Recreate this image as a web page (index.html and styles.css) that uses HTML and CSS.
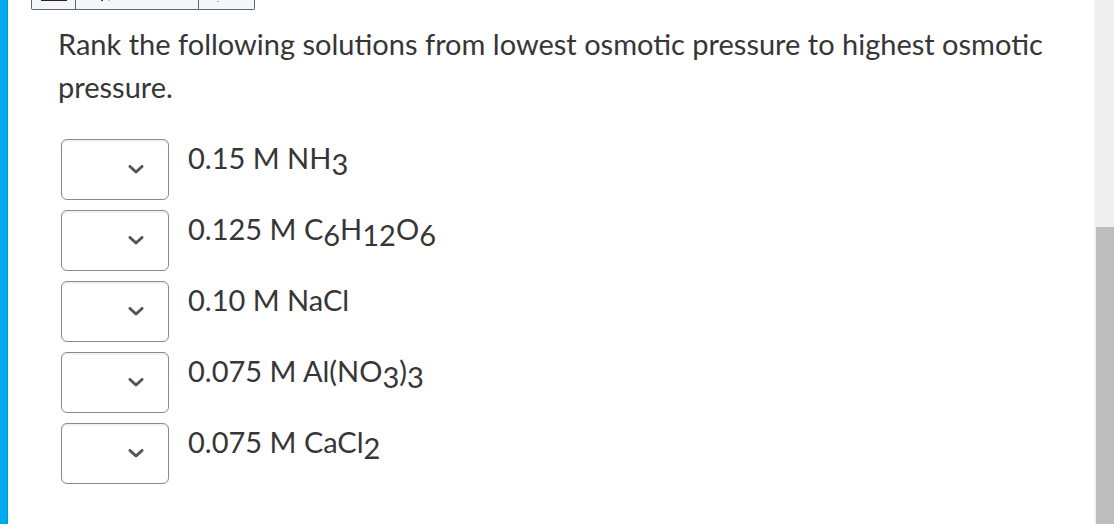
FILE: index.html
```html
<!DOCTYPE html>
<html lang="en">
<head>
<meta charset="utf-8">
<title>Osmotic pressure ranking</title>
<link rel="stylesheet" href="styles.css">
</head>
<body>
<div class="frame">
  <div class="accent"></div>
  <main class="content">
    <div class="toolbar">
      <div class="tool tool-first"><span class="tool-mark"></span></div>
      <div class="tool tool-mid"><span class="dot dot-navy"></span><span class="dot dot-peach"></span></div>
      <div class="tool tool-last"><span class="dot dot-green"></span></div>
    </div>
    <p class="prompt">Rank the following solutions from lowest osmotic pressure to highest osmotic pressure.</p>
    <ol class="rank-list">
      <li class="rank-row">
        <button class="picker" type="button" aria-label="rank"><svg class="chev" viewBox="0 0 16 9" width="16" height="9"><path d="M2 1.5 L8 7 L14 1.5" /></svg></button>
        <span class="species">0.15 M NH<sub>3</sub></span>
      </li>
      <li class="rank-row">
        <button class="picker" type="button" aria-label="rank"><svg class="chev" viewBox="0 0 16 9" width="16" height="9"><path d="M2 1.5 L8 7 L14 1.5" /></svg></button>
        <span class="species">0.125 M C<sub>6</sub>H<sub>12</sub>O<sub>6</sub></span>
      </li>
      <li class="rank-row">
        <button class="picker" type="button" aria-label="rank"><svg class="chev" viewBox="0 0 16 9" width="16" height="9"><path d="M2 1.5 L8 7 L14 1.5" /></svg></button>
        <span class="species">0.10 M NaCl</span>
      </li>
      <li class="rank-row">
        <button class="picker" type="button" aria-label="rank"><svg class="chev" viewBox="0 0 16 9" width="16" height="9"><path d="M2 1.5 L8 7 L14 1.5" /></svg></button>
        <span class="species">0.075 M Al(NO<sub>3</sub>)<sub>3</sub></span>
      </li>
      <li class="rank-row">
        <button class="picker" type="button" aria-label="rank"><svg class="chev" viewBox="0 0 16 9" width="16" height="9"><path d="M2 1.5 L8 7 L14 1.5" /></svg></button>
        <span class="species">0.075 M CaCl<sub>2</sub></span>
      </li>
    </ol>
  </main>
  <div class="scrollbar"><div class="scroll-track"></div><div class="scroll-thumb"></div></div>
</div>
</body>
</html>
```

FILE: styles.css
```css
html, body {
  margin: 0;
  padding: 0;
  background: #ffffff;
}

.frame {
  display: flex;
  width: 1114px;
  height: 524px;
  overflow: hidden;
  font-family: Lato, "Open Sans", sans-serif;
  color: #363636;
}

.accent {
  flex: 0 0 8px;
  background: #00aaee;
  box-shadow: inset -1px 0 0 #0597d4;
}

.content {
  flex: 1 1 auto;
  display: flex;
  flex-direction: column;
  padding-left: 23px;
}

/* toolbar strip, scrolled mostly out of view */
.toolbar {
  display: flex;
  width: 222px;
  height: 9px;
  background: #f4f7fa;
  border: 1px solid #5f666d;
  border-top: none;
  border-radius: 0 0 2px 2px;
}

.tool {
  position: relative;
  height: 100%;
}

.tool-first { width: 43px; border-right: 1px solid #5f666d; }
.tool-mid { width: 122px; border-right: 1px solid #5f666d; }
.tool-last { flex: 1; }

.tool-mark {
  position: absolute;
  left: 9px;
  top: 0;
  width: 26px;
  height: 1px;
  background: #222;
}

.dot {
  position: absolute;
  top: 0;
  width: 2px;
  height: 1px;
}
.dot-navy { left: 25px; background: #3a3f6e; }
.dot-peach { left: 32px; background: #f2b49a; }
.dot-green { left: 18px; top: 1px; background: #7cc487; }

.prompt {
  margin: 12px 0 0 0;
  padding-left: 27px;
  padding-right: 10px;
  font-size: 29px;
  line-height: 43px;
}

.rank-list {
  list-style: none;
  margin: 31px 0 0 0;
  padding: 0 0 0 30px;
  display: flex;
  flex-direction: column;
  gap: 10px;
}

.rank-row {
  display: flex;
  align-items: flex-start;
  gap: 19px;
}

.picker {
  flex: 0 0 auto;
  width: 108px;
  height: 61px;
  margin: 0;
  padding: 0 24px 0 0;
  display: flex;
  align-items: center;
  justify-content: flex-end;
  background: #ffffff;
  border: 1px solid #8a8a8a;
  border-radius: 6px;
  box-shadow: inset 0 2px 0 #f0f2f4;
}

.chev path {
  fill: none;
  stroke: #555555;
  stroke-width: 3;
  stroke-linecap: round;
  stroke-linejoin: round;
}

.species {
  font-size: 29px;
  line-height: 30px;
  padding-top: 4px;
  white-space: nowrap;
}

.species sub {
  font-size: 100%;
  vertical-align: -6px;
  line-height: 0;
}

.scrollbar {
  flex: 0 0 20px;
  display: flex;
  flex-direction: column;
  background: #efefef;
  box-shadow: inset 1px 0 0 #f7f7f7;
}

.scroll-track { flex: 0 0 227px; }

.scroll-thumb {
  flex: 1 1 auto;
  margin-left: 2px;
  background: #bdbdbd;
}
```
